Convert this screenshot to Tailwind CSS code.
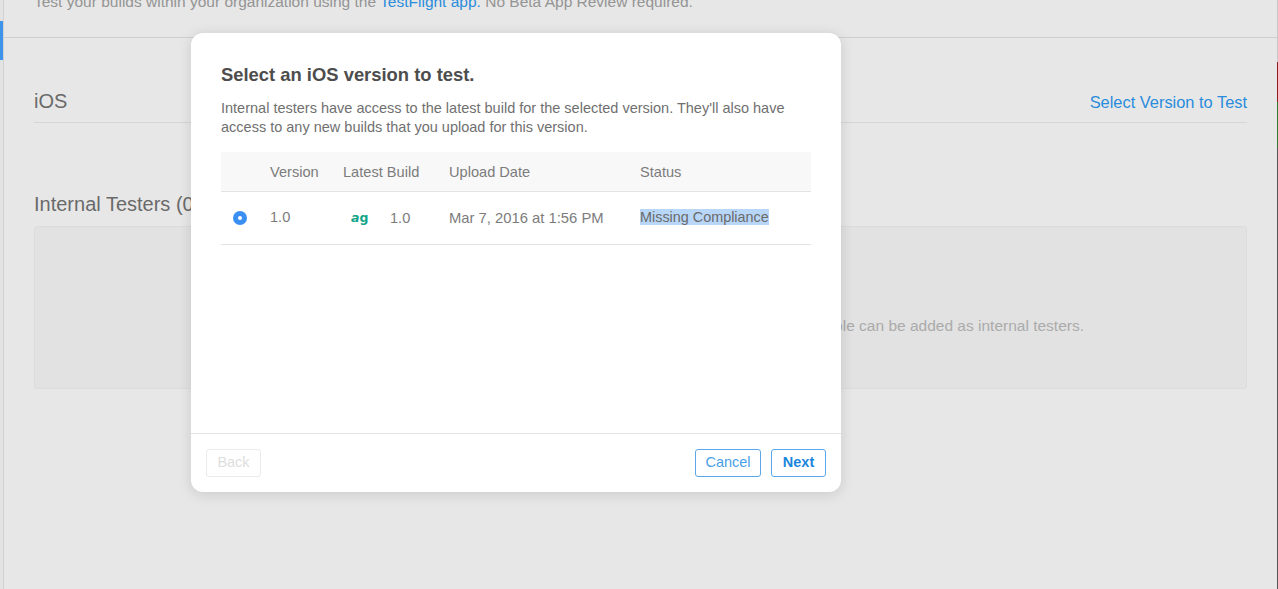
<!DOCTYPE html>
<html lang="en">
<head>
    <meta charset="UTF-8">
    <title>TestFlight</title>
    <script src="https://cdn.jsdelivr.net/npm/@tailwindcss/browser@4"></script>
</head>
<body class="relative h-[589px] w-[1278px] overflow-hidden bg-[#e7e7e7] font-['Liberation_Sans',sans-serif] text-[#666]">

    <div class="flex h-full">
        <!-- sidebar edge -->
        <div class="h-full w-[4px] shrink-0 border-r border-[#d2d2d2] bg-[#e3e3e3] pt-[21px]">
            <div class="h-[39px] w-[3px] bg-[#3d94ea]"></div>
        </div>

        <!-- page behind the dialog -->
        <div class="w-[1273px] shrink-0">
            <div class="-mt-[7px] flex h-[45px] items-start border-b border-[#cfcfcf] pl-[30px]">
                <p class="text-[15.5px] leading-[18px] text-[#949494]">Test your builds within your organization using the <span class="text-[#2a8cdc]">TestFlight app.</span> No Beta App Review required.</p>
            </div>
            <div class="pl-[30px] pr-[30px]">
                <div class="mt-[50px] flex h-[35px] items-start justify-between border-b border-[#d6d6d6]">
                    <h2 class="-mt-[1px] text-[20px] leading-[28px] text-[#6a6a6a]">iOS</h2>
                    <a class="pt-[4px] text-[16.4px] leading-[20px] text-[#2a8cdc]">Select Version to Test</a>
                </div>
                <h2 class="mt-[67px] text-[20px] leading-[28px] text-[#6a6a6a]">Internal Testers (0)</h2>
                <div class="mt-[8px] flex h-[163px] justify-end rounded-[3px] border border-[#dcdcdc] bg-[#e2e2e2] pr-[162px] pt-[90px]">
                    <p class="text-[15.5px] leading-[18px] text-[#ababab]">Only people can be added as internal testers.</p>
                </div>
            </div>
        </div>

        <!-- window behind, right edge -->
        <div class="flex h-full w-[1px] shrink-0 flex-col bg-[#555]">
            <div class="h-[62px] bg-[#c8c8c8]"></div>
            <div class="h-[40px] bg-[#8a1f1f]"></div>
            <div class="h-[46px] bg-[#2f7a2f]"></div>
            <div class="flex-1 bg-[#555]"></div>
        </div>
    </div>

    <!-- dialog -->
    <div class="absolute left-[191px] top-[33px] flex h-[459px] w-[650px] flex-col rounded-[12px] bg-white shadow-[0_2px_14px_rgba(0,0,0,0.13)]">
        <div class="flex-1 px-[30px] pt-[32px]">
            <h1 class="text-[18.4px] leading-[20px] font-bold text-[#4d4d4d]">Select an iOS version to test.</h1>
            <p class="mt-[14px] text-[14.5px] leading-[19px] text-[#707070]">Internal testers have access to the latest build for the selected version. They'll also have<br>access to any new builds that you upload for this version.</p>

            <table class="mt-[15px] w-[590px] table-fixed text-left text-[14.6px]">
                <thead>
                    <tr class="h-[39px] border-b border-[#e3e3e3] bg-[#f8f8f8] text-[#7c7c7c]">
                        <th class="w-[49px] pt-[3px] font-normal"></th>
                        <th class="w-[73px] pt-[3px] font-normal">Version</th>
                        <th class="w-[106px] pt-[3px] font-normal">Latest Build</th>
                        <th class="w-[191px] pt-[3px] font-normal">Upload Date</th>
                        <th class="pt-[3px] font-normal">Status</th>
                    </tr>
                </thead>
                <tbody>
                    <tr class="h-[53px] border-b border-[#e3e3e3] text-[#7c7c7c]">
                        <td class="pl-[12px] pt-[1px]">
                            <div class="flex h-[14px] w-[14px] items-center justify-center rounded-full bg-[#3b8ff3]">
                                <div class="h-[4px] w-[4px] rounded-full bg-white"></div>
                            </div>
                        </td>
                        <td class="pt-[1px]">1.0</td>
                        <td class="pt-[1px]">
                            <div class="flex items-center">
                                <span class="w-[47px] pl-[8px] font-['DejaVu_Sans',sans-serif] text-[12.5px] leading-none font-bold text-[#12a58a]"><span class="italic">a</span>g</span>
                                <span class="pt-[1px]">1.0</span>
                            </div>
                        </td>
                        <td class="pt-[1px] text-[14.8px]">Mar 7, 2016 at 1:56 PM</td>
                        <td class="pt-[1px]"><span class="bg-[#b8d7f8] text-[14.4px] text-[#6a6a6a]">Missing Compliance</span></td>
                    </tr>
                </tbody>
            </table>
        </div>

        <div class="flex h-[59px] items-start justify-between border-t border-[#e3e3e3] px-[15px] pt-[15px]">
            <button class="h-[28px] w-[55px] rounded-[3px] border border-[#ebebeb] text-[14.5px] text-[#dedede]">Back</button>
            <div class="flex gap-[10px]">
                <button class="h-[28px] w-[66px] rounded-[3px] border border-[#5aa8e8] text-[14.5px] text-[#4a9fe6]">Cancel</button>
                <button class="h-[28px] w-[55px] rounded-[3px] border border-[#5aa8e8] text-[14.5px] font-bold text-[#1a86dd]">Next</button>
            </div>
        </div>
    </div>

</body>
</html>
